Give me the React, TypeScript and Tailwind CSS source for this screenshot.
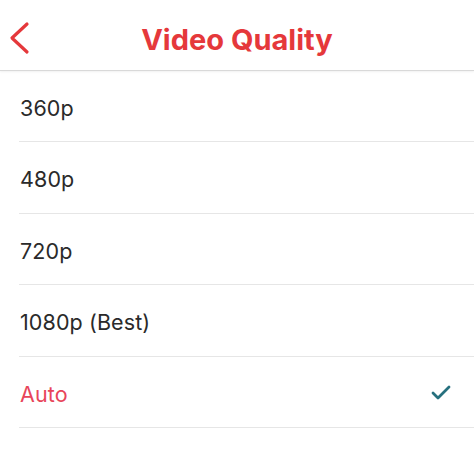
import React from "react";

const options = ["360p", "480p", "720p", "1080p (Best)", "Auto"];

export default function App() {
  const selected = "Auto";
  return (
    <div
      className="w-[474px] h-[462px] bg-white overflow-hidden"
      style={{ fontFamily: "Inter, 'Liberation Sans', sans-serif" }}
    >
      <header className="relative h-[71px] flex items-center justify-center border-b border-[#d9d9d9] shadow-[0_1px_2px_rgba(0,0,0,0.06)]">
        <button className="absolute left-[6px] top-[21px] w-[26px] h-[34px] flex items-center justify-center">
          <svg width="22" height="34" viewBox="0 0 22 34" fill="none">
            <path
              d="M19 3 L4 17 L19 31"
              stroke="#e5383b"
              strokeWidth="3.2"
              strokeLinecap="round"
              strokeLinejoin="round"
            />
          </svg>
        </button>
        <h1 className="text-[29px] leading-none font-bold text-[#e5383b] tracking-[0px] mt-[8px]">
          Video Quality
        </h1>
      </header>
      <ul className="ml-[19px]">
        {options.map((o) => (
          <li
            key={o}
            className="h-[71.4px] flex items-center justify-between border-b border-[#e6e6e6] pl-px pr-[23px]"
          >
            <span
              className={`text-[21.5px] leading-none pt-[5px] tracking-[0.1px] ${
                o === selected ? "text-[#e8455a]" : "text-[#2a2a2a]"
              }`}
            >
              {o}
            </span>
            {o === selected && (
              <svg width="20" height="15" viewBox="0 0 20 15" fill="none" className="mt-[2px]">
                <path
                  d="M2 8 L7 13 L18 2"
                  stroke="#26707e"
                  strokeWidth="2.8"
                  strokeLinecap="round"
                  strokeLinejoin="round"
                />
              </svg>
            )}
          </li>
        ))}
      </ul>
    </div>
  );
}
